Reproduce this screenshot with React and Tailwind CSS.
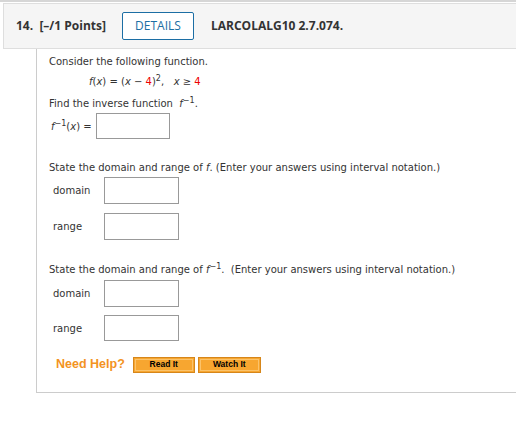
export default function App() {
  const verdana = { fontFamily: '"DejaVu Sans", Verdana, sans-serif' };
  const Box = ({ w = 'w-[75px]', h = 'h-[27px]' }) => (
    <div className={`${w} ${h} border border-[#999] bg-white`} />
  );
  const FInv = () => (
    <span className="italic">
      f<sup className="not-italic text-[8px] relative top-[-4px]">−1</sup>
    </span>
  );
  return (
    <div className="w-[516px] h-[422px] bg-white text-[#333] relative overflow-hidden">
      <div className="h-[2px] bg-[#d6d6d6]" />
      <div
        className="ml-[3px] mt-[1px] h-[46px] bg-[#f5f5f5] border border-r-0 border-[#dedede] flex items-center pl-[12px]"
        style={{ fontFamily: '"Open Sans", sans-serif' }}
      >
        <span className="text-[12px] font-bold text-[#333] whitespace-pre">14.  [–/1 Points]</span>
        <div className="ml-[16px] w-[72px] h-[28px] border border-[#1c6ea4] rounded-[2px] flex items-center justify-center text-[12px] text-[#1c6ea4] bg-white">
          DETAILS
        </div>
        <span className="ml-[17px] text-[12px] font-bold text-[#333]">LARCOLALG10 2.7.074.</span>
      </div>
      <div
        className="ml-[36px] h-[344px] border-l border-b border-[#cccccc] pl-[12px] pt-[6px] text-[10px] text-[#333]"
        style={verdana}
      >
        <div className="h-[12px] leading-[12px] mt-[1px]">Consider the following function.</div>
        <div className="h-[12px] leading-[12px] mt-[8px] pl-[40px] whitespace-pre">
          <span className="italic">f</span>(<span className="italic">x</span>) = (<span className="italic">x</span> − <span className="text-[#e00]">4</span>)<sup className="text-[8px]">2</sup>,   <span className="italic">x</span> ≥ <span className="text-[#e00]">4</span>
        </div>
        <div className="h-[12px] leading-[12px] mt-[10px] whitespace-pre">
          Find the inverse function  <FInv />.
        </div>
        <div className="flex items-center mt-[3px] h-[26px]">
          <span className="ml-[2px] whitespace-pre">
            <FInv />(<span className="italic">x</span>) =
          </span>
          <div className="ml-[4px]">
            <Box w="w-[74px]" h="h-[26px]" />
          </div>
        </div>
        <div className="h-[12px] leading-[12px] mt-[23px]">
          State the domain and range of <span className="italic">f</span>. (Enter your answers using interval notation.)
        </div>
        <div className="flex items-center mt-[3px] h-[27px]">
          <span className="w-[55px] pl-[4px]">domain</span>
          <Box />
        </div>
        <div className="flex items-center mt-[9px] h-[27px]">
          <span className="w-[55px] pl-[4px]">range</span>
          <Box />
        </div>
        <div className="h-[12px] leading-[12px] mt-[24px] whitespace-pre">
          State the domain and range of <FInv />.  (Enter your answers using interval notation.)
        </div>
        <div className="flex items-center mt-[4px] h-[27px]">
          <span className="w-[55px] pl-[4px]">domain</span>
          <Box />
        </div>
        <div className="flex items-center mt-[8px] h-[26px]">
          <span className="w-[55px] pl-[4px]">range</span>
          <Box h="h-[26px]" />
        </div>
        <div className="flex items-center mt-[15px] h-[17px]" style={{ fontFamily: '"Liberation Sans", Arial, sans-serif' }}>
          <span className="ml-[7px] text-[12.5px] font-bold text-[#f39322]">Need Help?</span>
          <div className="ml-[8px] w-[62px] h-[16px] bg-[#f7a630] border border-[#d6861a] flex items-center justify-center">
            <div className="w-[58px] h-[12px] border border-[#fbc36b] flex items-center justify-center text-[8.5px] font-bold text-black leading-none">Read It</div>
          </div>
          <div className="ml-[3px] w-[63px] h-[16px] bg-[#f7a630] border border-[#d6861a] flex items-center justify-center">
            <div className="w-[59px] h-[12px] border border-[#fbc36b] flex items-center justify-center text-[8.5px] font-bold text-black leading-none">Watch It</div>
          </div>
        </div>
      </div>
    </div>
  );
}
